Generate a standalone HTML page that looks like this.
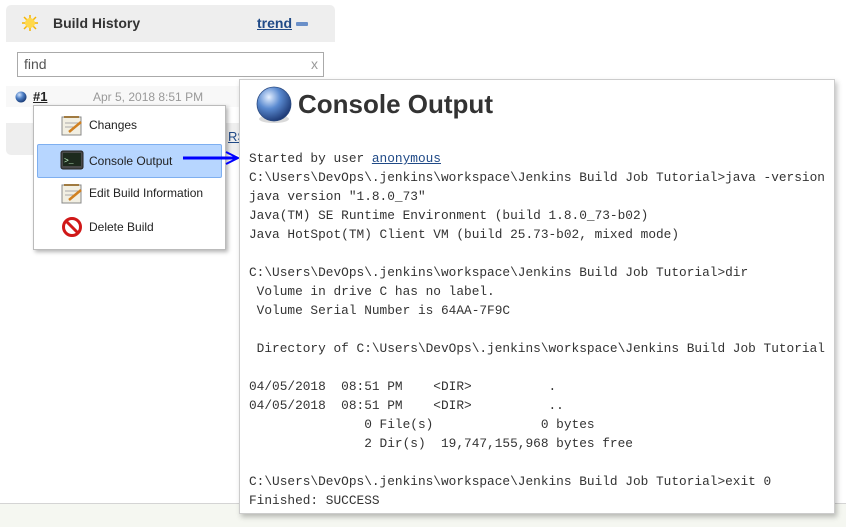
<!DOCTYPE html>
<html><head><meta charset="utf-8"><style>
body{margin:0;width:846px;height:526px;background:#fff;position:relative;overflow:hidden;font-family:"Liberation Sans",sans-serif;}
.footer{position:absolute;left:0;top:503px;width:846px;height:23px;background:#f5f7f1;border-top:1px solid #d4d4d4;}
.bh{position:absolute;left:6px;top:5px;width:329px;height:150px;background:#eee;border-radius:5px;}
.title{position:absolute;left:47px;top:10px;font-size:14px;font-weight:bold;color:#333;}
.trend{position:absolute;left:251px;top:10px;font-size:14px;font-weight:bold;color:#204a87;text-decoration:underline;}
.minus{position:absolute;left:290px;top:17px;width:12px;height:4px;background:#6a8fc8;border-radius:1px;}
.sbox{position:absolute;left:11px;top:47px;width:305px;height:23px;border:1px solid #aaa;background:#fff;}
.sbox span{position:absolute;left:6px;top:3px;font-size:14px;color:#555;}
.sbox i{position:absolute;right:5px;top:3px;font-style:normal;color:#999;font-size:14px;}
.row{position:absolute;left:0;top:81px;width:329px;height:21px;background:#f8f8f8;}
.menu{position:absolute;left:33px;top:105px;width:191px;height:143px;background:#fff;border:1px solid #bbb;box-shadow:2px 2px 4px rgba(0,0,0,.3);}
.it{position:absolute;left:0;width:191px;height:32px;font-size:12px;color:#222;}
.it span{position:absolute;left:55px;top:9px;}
.it.sel{left:3px;width:183px;background:#b7d6ff;border:1px solid #7eaff0;border-radius:2px;}
.it.sel span{left:51px;}
.panel{position:absolute;left:239px;top:79px;width:594px;height:433px;background:#fff;border:1px solid #ccc;box-shadow:2px 3px 5px rgba(0,0,0,.25);}
h1{position:absolute;left:58px;top:9px;margin:0;font-size:26px;font-weight:bold;color:#333;}
pre{position:absolute;left:9px;top:69px;margin:0;font-family:"Liberation Mono",monospace;font-size:12.8px;line-height:19px;color:#333;}
pre a{color:#204a87;text-decoration:underline;}
</style></head><body>
<div class="footer"></div>
<div class="bh">
  <svg style="position:absolute;left:16px;top:10px" width="16" height="16" viewBox="0 0 16 16"><g stroke="#f5b400" stroke-width="1.5"><line x1="8" y1="0" x2="8" y2="16"/><line x1="0" y1="8" x2="16" y2="8"/><line x1="2" y1="2" x2="14" y2="14"/><line x1="14" y1="2" x2="2" y2="14"/></g><circle cx="8" cy="8" r="5" fill="#ffd84a"/></svg>
  <div class="title">Build History</div>
  <div class="trend">trend</div><div class="minus"></div>
  <div style="position:absolute;left:0;top:37px;width:329px;height:81px;background:#fff;"></div>
  <div class="sbox"><span>find</span><i>x</i></div>
 <div class="row">
  <svg style="position:absolute;left:9px;top:5px" width="12" height="12"><defs><radialGradient id="b1" cx=".35" cy=".3" r=".7"><stop offset="0" stop-color="#cfe3ff"/><stop offset=".5" stop-color="#4d7ec4"/><stop offset="1" stop-color="#1d3f7a"/></radialGradient></defs><circle cx="6" cy="6" r="5.5" fill="url(#b1)"/></svg>
  <span style="position:absolute;left:27px;top:3px;font-size:13px;font-weight:bold;color:#222;text-decoration:underline">#1</span>
  <span style="position:absolute;left:87px;top:4px;font-size:12px;color:#999">Apr 5, 2018 8:51 PM</span>
 </div>
 <span style="position:absolute;left:222px;top:124px;font-size:13px;color:#204a87;text-decoration:underline">RS</span>
</div>
<div class="menu">
 <div class="it" style="top:3px"><svg style="position:absolute;left:27px;top:5px" width="22" height="22"><rect x="1" y="3" width="19" height="18" fill="#f2efe2" stroke="#888"/><line x1="3" y1="3" x2="18" y2="3" stroke="#a07a40" stroke-width="2"/><line x1="4" y1="9" x2="17" y2="9" stroke="#aaa"/><line x1="4" y1="13" x2="15" y2="13" stroke="#aaa"/><line x1="8" y1="18" x2="20" y2="8" stroke="#d08020" stroke-width="2.5"/></svg><span>Changes</span></div>
 <div class="it sel" style="top:38px"><svg style="position:absolute;left:22px;top:4px" width="24" height="22"><rect x="1" y="2" width="22" height="18" rx="2" fill="#4a4a4a" stroke="#222"/><rect x="3" y="4" width="18" height="13" fill="#1d2a1d"/><text x="4" y="14" font-size="8" fill="#cfc" font-family="Liberation Mono">&gt;_</text></svg><span>Console Output</span></div>
 <div class="it" style="top:71px"><svg style="position:absolute;left:27px;top:5px" width="22" height="22"><rect x="1" y="3" width="19" height="18" fill="#f2efe2" stroke="#888"/><line x1="3" y1="3" x2="18" y2="3" stroke="#a07a40" stroke-width="2"/><line x1="4" y1="9" x2="17" y2="9" stroke="#aaa"/><line x1="4" y1="13" x2="15" y2="13" stroke="#aaa"/><line x1="8" y1="18" x2="20" y2="8" stroke="#d08020" stroke-width="2.5"/></svg><span>Edit Build Information</span></div>
 <div class="it" style="top:105px"><svg style="position:absolute;left:27px;top:5px" width="22" height="22"><circle cx="11" cy="11" r="8.5" fill="#fff" stroke="#d01818" stroke-width="3"/><line x1="5" y1="5" x2="17" y2="17" stroke="#d01818" stroke-width="3"/></svg><span>Delete Build</span></div>
</div>
<svg style="position:absolute;left:182px;top:150px" width="60" height="16"><line x1="1" y1="8" x2="54" y2="8" stroke="#0000ff" stroke-width="3"/><polyline points="44,2 56,8 44,14" fill="none" stroke="#0000ff" stroke-width="2"/></svg>
<div class="panel">
 <svg style="position:absolute;left:15px;top:6px" width="40" height="40"><defs><radialGradient id="b2" cx=".35" cy=".3" r=".75"><stop offset="0" stop-color="#e4efff"/><stop offset=".45" stop-color="#5a8ad0"/><stop offset="1" stop-color="#1a3570"/></radialGradient></defs><ellipse cx="19" cy="33" rx="15" ry="4" fill="rgba(0,0,0,.15)"/><circle cx="19" cy="18" r="17" fill="url(#b2)" stroke="#2a4a80" stroke-width=".8"/></svg>
 <h1>Console Output</h1>
<pre>Started by user <a>anonymous</a>
C:\Users\DevOps\.jenkins\workspace\Jenkins Build Job Tutorial&gt;java -version
java version "1.8.0_73"
Java(TM) SE Runtime Environment (build 1.8.0_73-b02)
Java HotSpot(TM) Client VM (build 25.73-b02, mixed mode)

C:\Users\DevOps\.jenkins\workspace\Jenkins Build Job Tutorial&gt;dir
 Volume in drive C has no label.
 Volume Serial Number is 64AA-7F9C

 Directory of C:\Users\DevOps\.jenkins\workspace\Jenkins Build Job Tutorial

04/05/2018  08:51 PM    &lt;DIR&gt;          .
04/05/2018  08:51 PM    &lt;DIR&gt;          ..
               0 File(s)              0 bytes
               2 Dir(s)  19,747,155,968 bytes free

C:\Users\DevOps\.jenkins\workspace\Jenkins Build Job Tutorial&gt;exit 0
Finished: SUCCESS</pre>
</div>
</body></html>
